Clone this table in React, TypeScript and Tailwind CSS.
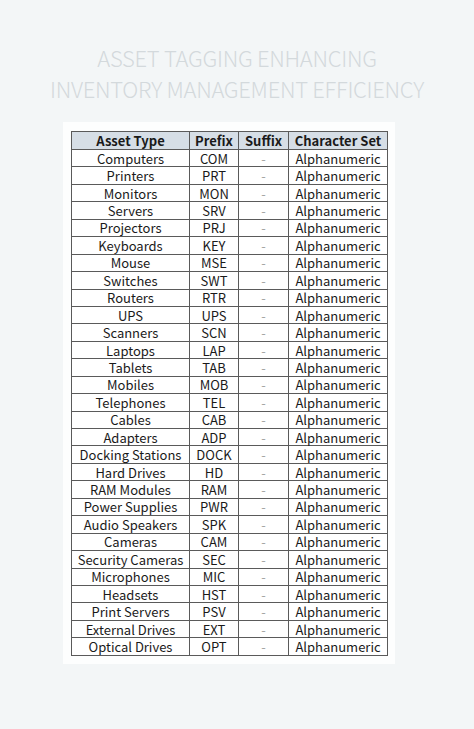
import React from 'react'

const rows: [string, string][] = [
  ['Computers', 'COM'],
  ['Printers', 'PRT'],
  ['Monitors', 'MON'],
  ['Servers', 'SRV'],
  ['Projectors', 'PRJ'],
  ['Keyboards', 'KEY'],
  ['Mouse', 'MSE'],
  ['Switches', 'SWT'],
  ['Routers', 'RTR'],
  ['UPS', 'UPS'],
  ['Scanners', 'SCN'],
  ['Laptops', 'LAP'],
  ['Tablets', 'TAB'],
  ['Mobiles', 'MOB'],
  ['Telephones', 'TEL'],
  ['Cables', 'CAB'],
  ['Adapters', 'ADP'],
  ['Docking Stations', 'DOCK'],
  ['Hard Drives', 'HD'],
  ['RAM Modules', 'RAM'],
  ['Power Supplies', 'PWR'],
  ['Audio Speakers', 'SPK'],
  ['Cameras', 'CAM'],
  ['Security Cameras', 'SEC'],
  ['Microphones', 'MIC'],
  ['Headsets', 'HST'],
  ['Print Servers', 'PSV'],
  ['External Drives', 'EXT'],
  ['Optical Drives', 'OPT'],
]

export default function App() {
  return (
    <div className="w-[474px] h-[729px] bg-[#f3f6f7] font-['Noto_Sans_CJK_SC','Noto_Sans',sans-serif] overflow-hidden">
      <div className="pt-[42px] text-center text-[22px] leading-[31px] font-light text-[#d3d9dc] tracking-[-0.3px]">
        <div>ASSET TAGGING ENHANCING</div>
        <div>INVENTORY MANAGEMENT EFFICIENCY</div>
      </div>

      <div className="mt-[18px] ml-[63px] w-[332px] bg-[#fdfefe] px-[8px] pt-[9px] pb-[8px]">
        <table className="w-[316px] border-collapse table-fixed text-[13px] text-[#1a1a1a]">
          <colgroup>
            <col className="w-[118px]" />
            <col className="w-[49px]" />
            <col className="w-[50px]" />
            <col className="w-[99px]" />
          </colgroup>
          <thead>
            <tr className="h-[18px] bg-[#d6dee6]">
              <th className="border border-[#5a5a5a] p-0 font-bold leading-[16px]">Asset Type</th>
              <th className="border border-[#5a5a5a] p-0 font-bold leading-[16px]">Prefix</th>
              <th className="border border-[#5a5a5a] p-0 font-bold leading-[16px]">Suffix</th>
              <th className="border border-[#5a5a5a] p-0 font-bold leading-[16px]">Character Set</th>
            </tr>
          </thead>
          <tbody>
            {rows.map(([name, prefix]) => (
              <tr key={name} className="h-[17.45px] bg-white">
                <td className="border border-[#5a5a5a] p-0 text-center leading-[15px]">{name}</td>
                <td className="border border-[#5a5a5a] p-0 text-center leading-[15px]">{prefix}</td>
                <td className="border border-[#5a5a5a] p-0 text-center leading-[15px] text-[#a5a5a5]">-</td>
                <td className="border border-[#5a5a5a] p-0 text-center leading-[15px]">Alphanumeric</td>
              </tr>
            ))}
          </tbody>
        </table>
      </div>
    </div>
  )
}
